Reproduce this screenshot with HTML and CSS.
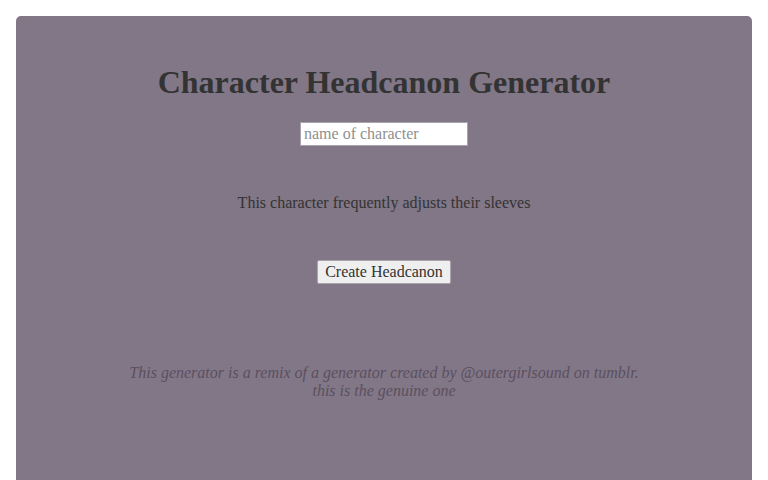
FILE: index.html
```html
<!DOCTYPE html>
<html>
<head>
<meta charset="utf-8">
<link rel="stylesheet" href="styles.css">
</head>
<body>
<div class="card">
  <h1 class="title">Character Headcanon Generator</h1>
  <div class="field-row"><input class="name-input" type="text" placeholder="name of character"></div>
  <p class="result">This character frequently adjusts their sleeves</p>
  <div class="btn-row"><button class="create-btn">Create Headcanon</button></div>
  <p class="credit">This generator is a remix of a generator created by @outergirlsound on tumblr.<br>this is the genuine one</p>
</div>
</body>
</html>
```
FILE: styles.css
```css
html, body {
  margin: 0;
  padding: 0;
  background: #ffffff;
}
body {
  padding: 16px 16px 0 16px;
  font-family: "Liberation Serif", "Times New Roman", serif;
  color: #333333;
  overflow: hidden;
  height: 480px;
  box-sizing: border-box;
}
.card {
  background: #827787;
  border-radius: 5px 5px 0 0;
  height: 464px;
  text-align: center;
  padding-top: 48px;
  box-sizing: border-box;
}
.title {
  margin: 0;
  font-size: 32px;
  line-height: 37px;
  font-weight: bold;
  color: #333333;
}
.field-row {
  margin-top: 21px;
  line-height: 0;
}
.name-input {
  width: 168px;
  height: 24px;
  box-sizing: border-box;
  font-family: "Liberation Serif", "Times New Roman", serif;
  font-size: 16px;
  padding: 1px 3px;
  border: 1px solid #a9a3ac;
  background: #ffffff;
  margin: 0;
}
.name-input::placeholder {
  color: #8f8f8f;
}
.result {
  margin: 48px 0 0 0;
  font-size: 16px;
  line-height: 18px;
  color: #333333;
}
.btn-row {
  margin-top: 48px;
  line-height: 0;
}
.create-btn {
  font-family: "Liberation Serif", "Times New Roman", serif;
  font-size: 16px;
  width: 134px;
  height: 24px;
  padding: 0;
  border: 1px solid #a9a3ac;
  border-radius: 2px;
  background: #efefef;
  color: #333333;
}
.credit {
  margin: 80px 0 0 0;
  font-size: 16px;
  line-height: 18px;
  font-style: italic;
  color: #5a5060;
}
```
